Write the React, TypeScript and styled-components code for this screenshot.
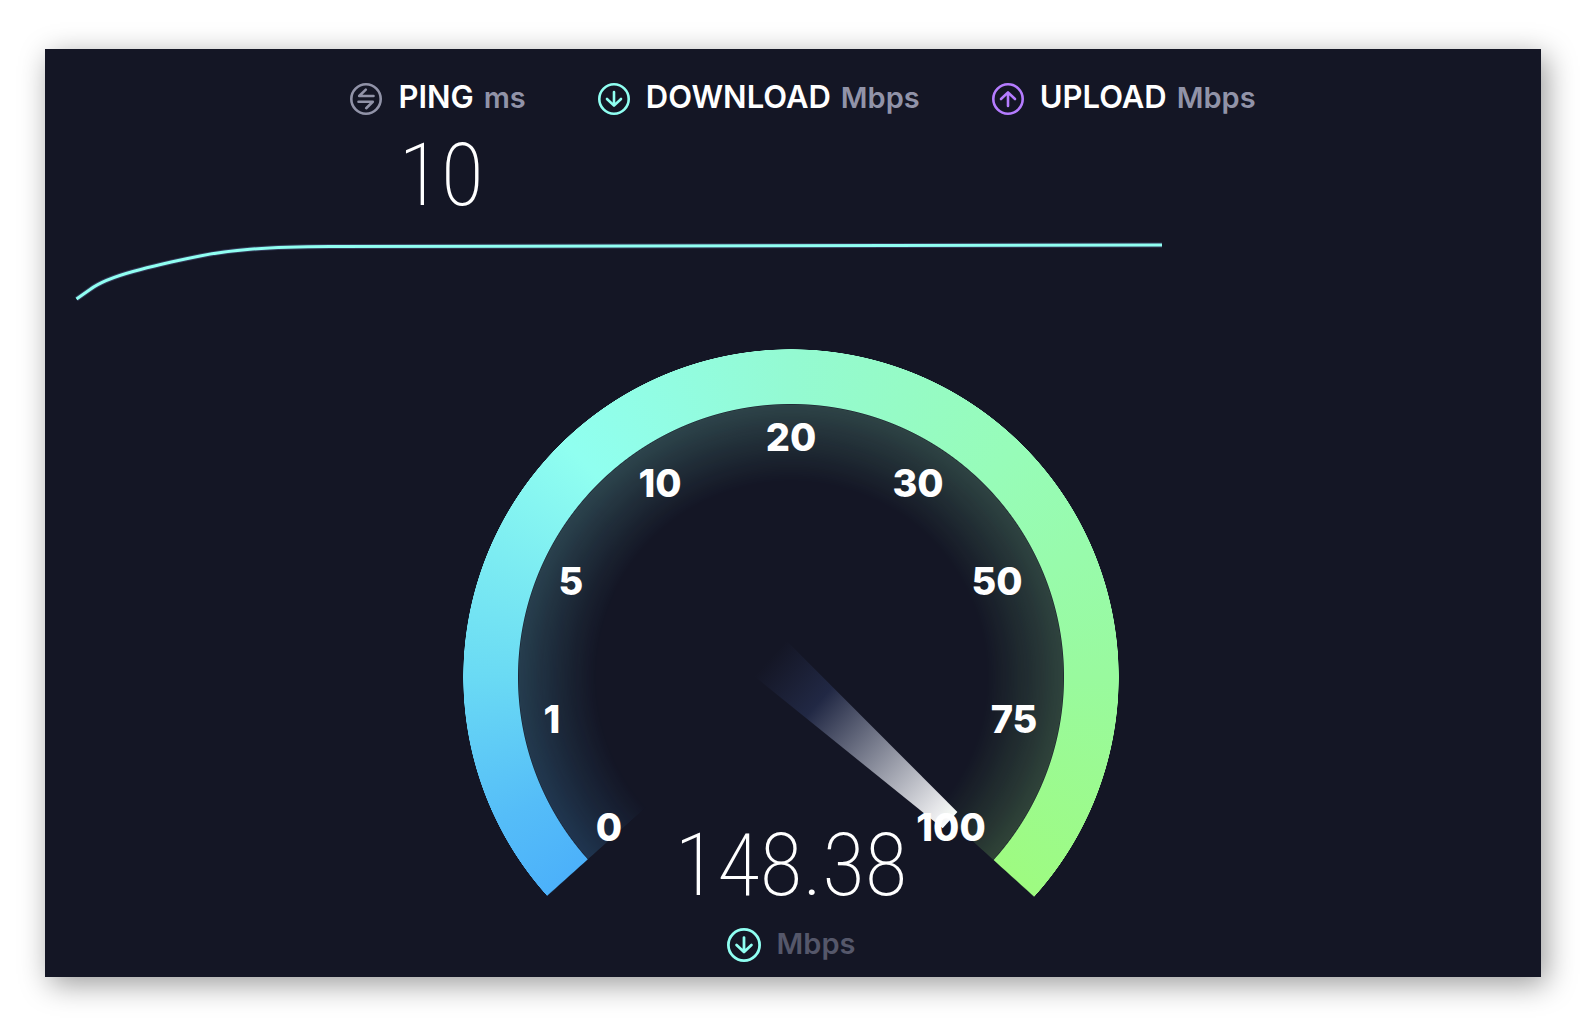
import React from 'react';
import styled, { createGlobalStyle } from 'styled-components';

const GlobalStyle = createGlobalStyle`
  *, *::before, *::after { box-sizing: border-box; }
  body {
    margin: 0;
    background: #fff;
    font-family: Inter, 'Liberation Sans', sans-serif;
  }
`;

const Panel = styled.main`
  display: flex;
  flex-direction: column;
  margin: 49px 44px 49px 45px;
  padding-bottom: 15px;
  background: #141625;
  color: #fff;
  box-shadow: 5px 7px 28px rgba(0, 0, 0, 0.4);
`;

const Results = styled.header`
  display: flex;
  justify-content: center;
  gap: 72px;
  padding: 30px 0 0 20px;
`;

const Result = styled.section`
  display: grid;
  grid-template-columns: 32px auto;
  column-gap: 16px;
  grid-template-rows: 36px 92px;
`;

const ResultTitle = styled.h2`
  display: flex;
  align-items: baseline;
  gap: 10px;
  margin: 0;
  font-size: 31px;
  line-height: 36px;
  font-weight: 600;
  white-space: nowrap;
`;

const Unit = styled.span<{ $dim?: boolean }>`
  color: ${(p) => (p.$dim ? '#55576a' : '#9193a8')};
  font-size: 29px;
  line-height: 36px;
  font-weight: 600;
`;

const Digits = styled.output`
  font-family: 'Roboto Condensed', Roboto, sans-serif;
  font-size: 88px;
  line-height: 64px;
  font-weight: 250;
`;

const PingDigits = styled(Digits)`
  grid-column: 2;
  align-self: end;
`;

const Icon = styled.svg<{ $size: number }>`
  width: ${(p) => p.$size}px;
  height: ${(p) => p.$size}px;
  align-self: end;
  fill: none;
  stroke-width: 2.6;
  stroke-linecap: round;
  stroke-linejoin: round;
`;

const Trace = styled.svg`
  display: block;
  width: 100%;
  height: 80px;
  margin-top: 22px;
  fill: none;
  stroke: #90fff2;
  stroke-width: 3;
`;

const Meter = styled.section`
  display: flex;
  flex-direction: column;
  padding-right: 4px;
`;

const Gauge = styled.div`
  display: grid;
  justify-content: center;
  grid-template-columns: 656px;
  grid-template-rows: 548px;
  margin-top: 40px;

  & > * { grid-area: 1 / 1; }
`;

const SWEEP = `conic-gradient(
  from 228deg,
  rgba(76, 177, 250, 0) 0deg, #4cb1fa 0.2deg, #55bdf8 16deg, #6adaf4 42deg, #90fff0 88deg,
  #94fad2 132deg, #97fcb9 176deg, #99fa9e 222deg, #9efb81 264deg,
  transparent 264.2deg
)`;

const Ring = styled.div`
  height: 656px;
  background: ${SWEEP};
  mask-image: radial-gradient(circle closest-side, transparent 272.5px, #000 273.5px, #000 327.5px, transparent 328px);
`;

const Glow = styled.div`
  height: 656px;
  background: ${SWEEP};
  mask-image: radial-gradient(
    circle closest-side,
    transparent 194px, rgba(0, 0, 0, 0.03) 208px, rgba(0, 0, 0, 0.1) 236px,
    rgba(0, 0, 0, 0.2) 272px, transparent 273px
  );
`;

const Needle = styled.svg`
  width: 656px;
  height: 656px;
`;

const Scale = styled.ol`
  position: relative;
  margin: 0;
  padding: 0;
  list-style: none;
`;

const Tick = styled.li<{ $x: number; $y: number }>`
  position: absolute;
  left: ${(p) => 328 + p.$x}px;
  top: ${(p) => 328 + p.$y}px;
  transform: translate(-50%, -50%);
  font-size: 38px;
  line-height: 40px;
  font-weight: 800;
`;

const Speed = styled(Digits)`
  place-self: end center;
`;

const Footer = styled.footer`
  display: flex;
  justify-content: center;
  align-items: center;
  gap: 16px;
  margin-top: 29px;
`;

const TICKS = [
  { label: '0', x: -182, y: 150 },
  { label: '1', x: -239, y: 42 },
  { label: '5', x: -220, y: -96 },
  { label: '10', x: -131, y: -194 },
  { label: '20', x: 0, y: -240 },
  { label: '30', x: 127, y: -194 },
  { label: '50', x: 206, y: -96 },
  { label: '75', x: 223, y: 42 },
  { label: '100', x: 160, y: 150 },
];

const TRACE = 'M31.5 70L45 60.500C53 54.500 68 48 88 42.500C104 38 130 32 155 27C185 21 215 18 285 17.500L1117 16';

function PingIcon() {
  return (
    <Icon $size={32} viewBox="0 0 32 32" stroke="#9193a8" aria-hidden="true">
      <circle cx="16" cy="16" r="14.7" />
      <path d="M23.500 13H9.200l6.600-6.400M8.500 18.800h14.300l-6.600 6.400" />
    </Icon>
  );
}

function DownIcon({ size = 32 }: { size?: number }) {
  return (
    <Icon $size={size} viewBox="0 0 32 32" stroke="#90fff2" aria-hidden="true">
      <circle cx="16" cy="16" r="14.7" />
      <path d="M16 9v13M9 16l7 6.600 7-6.600" />
    </Icon>
  );
}

function UpIcon() {
  return (
    <Icon $size={32} viewBox="0 0 32 32" stroke="#b57cff" aria-hidden="true">
      <circle cx="16" cy="16" r="14.7" />
      <path d="M16 23V9.500M9 16l7-6.600 7 6.600" />
    </Icon>
  );
}

export default function App() {
  return (
    <>
      <GlobalStyle />
      <Panel>
        <Results>
          <Result>
            <PingIcon />
            <ResultTitle>PING <Unit>ms</Unit></ResultTitle>
            <PingDigits>10</PingDigits>
          </Result>
          <Result>
            <DownIcon />
            <ResultTitle>DOWNLOAD <Unit>Mbps</Unit></ResultTitle>
          </Result>
          <Result>
            <UpIcon />
            <ResultTitle>UPLOAD <Unit>Mbps</Unit></ResultTitle>
          </Result>
        </Results>

        <Trace viewBox="0 0 1496 80" preserveAspectRatio="none" aria-hidden="true">
          <path d={TRACE} stroke="#7f8fd0" strokeOpacity="0.3" strokeWidth="5" />
          <path d={TRACE} />
        </Trace>

        <Meter>
          <Gauge>
            <Glow />
            <Ring />
            <Needle viewBox="-328 -328 656 656" aria-hidden="true">
              <defs>
                <linearGradient id="needle" gradientUnits="userSpaceOnUse" x1="-28" y1="0" x2="214" y2="0">
                  <stop offset="0" stopColor="#212844" stopOpacity="0" />
                  <stop offset="0.27" stopColor="#212844" />
                  <stop offset="1" stopColor="#fcfcfc" />
                </linearGradient>
              </defs>
              <polygon points="-28,-24 214,-11 214,11 -28,24" fill="url(#needle)" transform="rotate(42)" />
            </Needle>
            <Scale>
              {TICKS.map((t) => (
                <Tick key={t.label} $x={t.x} $y={t.y}>{t.label}</Tick>
              ))}
            </Scale>
            <Speed>148.38</Speed>
          </Gauge>

          <Footer>
            <DownIcon size={34} />
            <Unit $dim>Mbps</Unit>
          </Footer>
        </Meter>
      </Panel>
    </>
  );
}
